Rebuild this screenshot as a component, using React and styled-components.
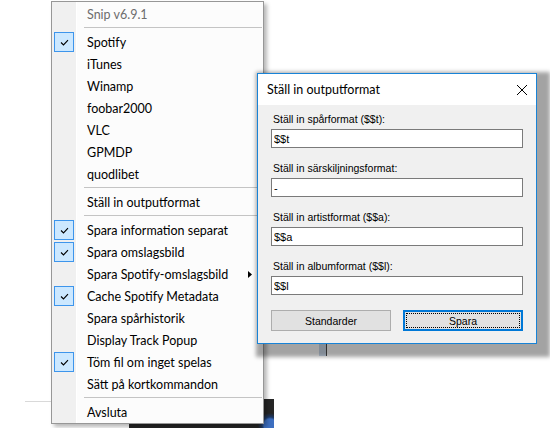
import React from "react";
import styled, { createGlobalStyle } from "styled-components";

const GlobalStyle = createGlobalStyle`
  html, body {
    margin: 0;
    padding: 0;
    background: #ffffff;
  }
`;

const Desktop = styled.div`
  position: relative;
  width: 550px;
  height: 428px;
  overflow: hidden;
  background: #ffffff;
`;

// bits of the app behind the popups
const Rule = styled.div`
  position: absolute;
  left: 25px;
  top: 401px;
  width: 26px;
  height: 1px;
  background: #d9d9d9;
`;

const Taskbar = styled.div`
  position: absolute;
  left: 129px;
  top: 399px;
  width: 145px;
  height: 29px;
  background: radial-gradient(circle at 141px 26px, #3d6fc0 0 6px, #1f3a66 8px, #262626 12px);
`;

const Splitter = styled.div`
  position: absolute;
  left: 319px;
  top: 330px;
  width: 7px;
  height: 26px;
  background: #cbd9ea;
  border-right: 1px solid #4a4a4a;
`;

const Menu = styled.div`
  position: absolute;
  left: 51px;
  top: 1px;
  width: 211px;
  padding-top: 1px;
  border: 1px solid #979797;
  background: linear-gradient(to right, #f0f0f0 0 24px, #ffffff 24px 25px, #fcfcfc 25px);
  box-shadow: 3px 3px 4px rgba(0, 0, 0, 0.28);
  font-family: Lato, "Noto Sans", sans-serif;
  font-size: 12.5px;
  color: #000;
`;

const Item = styled.div`
  display: flex;
  align-items: center;
  height: 22px;
  color: ${(p) => (p.$muted ? "#6d6d6d" : "#000")};
  white-space: nowrap;
`;

const Gutter = styled.div`
  display: flex;
  align-items: center;
  width: 33px;
  padding-left: 2px;
  height: 100%;
`;

const CheckBox = styled.span`
  display: flex;
  align-items: center;
  justify-content: center;
  box-sizing: border-box;
  width: 20px;
  height: 20px;
  background: #cce8ff;
  border: 1px solid #3d95ec;
`;

const Arrow = styled.svg`
  margin-left: auto;
  margin-right: 11px;
`;

const Separator = styled.div`
  height: 1px;
  margin: 2px 1px 3px 32px;
  background: #c4c4c4;
`;

const Dialog = styled.div`
  position: absolute;
  left: 257px;
  top: 73px;
  width: 278px;
  border: 1px solid #1883d7;
  background: #f0f0f0;
  box-shadow: 6px 6px 4px 7px rgba(0, 0, 0, 0.36);
`;

const TitleBar = styled.div`
  display: flex;
  align-items: center;
  height: 31px;
  padding: 0 9px;
  background: #ffffff;
  font-family: Lato, "Noto Sans", sans-serif;
  font-size: 12.5px;
  color: #000;
`;

const CloseIcon = styled.svg`
  margin-left: auto;
`;

const Client = styled.div`
  display: flex;
  flex-direction: column;
  gap: 13px;
  padding: 7px 13px 12px;
  font-family: "Liberation Sans", Arial, sans-serif;
  font-size: 10.5px;
  color: #000;
`;

const Field = styled.div`
  display: flex;
  flex-direction: column;
`;

const Label = styled.label`
  line-height: 14px;
  padding-left: 2px;
  margin-bottom: 3px;
`;

const TextBox = styled.input`
  box-sizing: border-box;
  width: 252px;
  height: 19px;
  margin: 0;
  padding: 0 2px;
  border: 1px solid #7a7a7a;
  background: #ffffff;
  font-family: "Liberation Sans", Arial, sans-serif;
  font-size: 11px;
  color: #000;
  outline: none;
`;

const Buttons = styled.div`
  display: flex;
  gap: 12px;
  margin-top: 2px;
`;

const Button = styled.div`
  position: relative;
  display: flex;
  align-items: center;
  justify-content: center;
  box-sizing: border-box;
  width: 120px;
  height: 21px;
  background: #e1e1e1;
  border: ${(p) => (p.$default ? "2px solid #0078d7" : "1px solid #adadad")};

  &::after {
    content: "";
    display: ${(p) => (p.$default ? "block" : "none")};
    position: absolute;
    inset: 1px;
    border: 1px dotted #000;
  }
`;

const Check = () => (
  <svg width="9" height="7" viewBox="0 0 9 7">
    <path d="M1 3.5 L3.5 6 L8 1.2" fill="none" stroke="#000" strokeWidth="1.1" />
  </svg>
);

const menu = [
  { label: "Snip v6.9.1", muted: true },
  "sep",
  { label: "Spotify", checked: true },
  { label: "iTunes" },
  { label: "Winamp" },
  { label: "foobar2000" },
  { label: "VLC" },
  { label: "GPMDP" },
  { label: "quodlibet" },
  "sep",
  { label: "Ställ in outputformat" },
  "sep",
  { label: "Spara information separat", checked: true },
  { label: "Spara omslagsbild", checked: true },
  { label: "Spara Spotify-omslagsbild", sub: true },
  { label: "Cache Spotify Metadata", checked: true },
  { label: "Spara spårhistorik" },
  { label: "Display Track Popup" },
  { label: "Töm fil om inget spelas", checked: true },
  { label: "Sätt på kortkommandon" },
  "sep",
  { label: "Avsluta" },
];

const fields = [
  { label: "Ställ in spårformat ($$t):", value: "$$t" },
  { label: "Ställ in särskiljningsformat:", value: "-" },
  { label: "Ställ in artistformat ($$a):", value: "$$a" },
  { label: "Ställ in albumformat ($$l):", value: "$$l" },
];

const App = () => {
  return (
    <Desktop>
      <GlobalStyle />
      <Rule />
      <Taskbar />
      <Splitter />

      <Menu>
        {menu.map((m, i) =>
          m === "sep" ? (
            <Separator key={i} />
          ) : (
            <Item key={i} $muted={m.muted}>
              <Gutter>
                {m.checked && (
                  <CheckBox>
                    <Check />
                  </CheckBox>
                )}
              </Gutter>
              {m.label}
              {m.sub && (
                <Arrow width="4" height="7" viewBox="0 0 4 7">
                  <path d="M0 0 L4 3.5 L0 7 Z" fill="#000" />
                </Arrow>
              )}
            </Item>
          )
        )}
      </Menu>

      <Dialog>
        <TitleBar>
          Ställ in outputformat
          <CloseIcon width="10" height="10" viewBox="0 0 10 10">
            <path d="M0 0 L10 10 M10 0 L0 10" stroke="#000" strokeWidth="1" />
          </CloseIcon>
        </TitleBar>
        <Client>
          {fields.map((f) => (
            <Field key={f.label}>
              <Label>{f.label}</Label>
              <TextBox value={f.value} readOnly />
            </Field>
          ))}
          <Buttons>
            <Button>Standarder</Button>
            <Button $default>Spara</Button>
          </Buttons>
        </Client>
      </Dialog>
    </Desktop>
  );
};

export default App;
